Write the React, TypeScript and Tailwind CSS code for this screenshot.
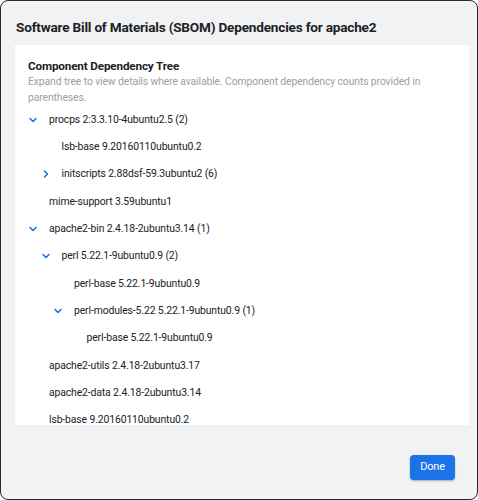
import React from "react";

type Row = { label: string; level: number; chevron?: "down" | "right" };

const rows: Row[] = [
  { label: "procps 2:3.3.10-4ubuntu2.5 (2)", level: 0, chevron: "down" },
  { label: "lsb-base 9.20160110ubuntu0.2", level: 1 },
  { label: "initscripts 2.88dsf-59.3ubuntu2 (6)", level: 1, chevron: "right" },
  { label: "mime-support 3.59ubuntu1", level: 0 },
  { label: "apache2-bin 2.4.18-2ubuntu3.14 (1)", level: 0, chevron: "down" },
  { label: "perl 5.22.1-9ubuntu0.9 (2)", level: 1, chevron: "down" },
  { label: "perl-base 5.22.1-9ubuntu0.9", level: 2 },
  { label: "perl-modules-5.22 5.22.1-9ubuntu0.9 (1)", level: 2, chevron: "down" },
  { label: "perl-base 5.22.1-9ubuntu0.9", level: 3 },
  { label: "apache2-utils 2.4.18-2ubuntu3.17", level: 0 },
  { label: "apache2-data 2.4.18-2ubuntu3.14", level: 0 },
  { label: "lsb-base 9.20160110ubuntu0.2", level: 0 },
];

const indent = ["pl-[21px]", "pl-[33.5px]", "pl-[46px]", "pl-[58.5px]"];

function Chevron({ dir }: { dir: "down" | "right" }) {
  return (
    <svg
      width="10"
      height="10"
      viewBox="0 0 10 10"
      className="absolute left-[-21px] top-1/2 -translate-y-1/2"
      fill="none"
      stroke="#1a73e8"
      strokeWidth="1.6"
      strokeLinecap="round"
      strokeLinejoin="round"
    >
      {dir === "down" ? <path d="M2 3.5 L5 6.5 L8 3.5" /> : <path d="M3.5 2 L6.5 5 L3.5 8" />}
    </svg>
  );
}

export default function App() {
  return (
    <div
      className="w-[478px] h-[500px] box-border border border-[#2a2a2a] rounded-[8px] bg-[#f1f2f4] flex flex-col overflow-hidden"
      style={{ fontFamily: "Roboto, 'Liberation Sans', sans-serif" }}
    >
      <div className="pt-[16px] pl-[15px] leading-[20px] text-[13.6px] tracking-[-0.2px] font-bold text-[#202124]">
        Software Bill of Materials (SBOM) Dependencies for apache2
      </div>
      <div className="mt-[8px] ml-[14px] mr-[8px] h-[380px] bg-white overflow-hidden pl-[13px] pr-[20px] pt-[13px]">
        <div className="text-[11.7px] tracking-[-0.15px] leading-[16px] font-bold text-[#202124]">
          Component Dependency Tree
        </div>
        <div className="text-[10.4px] tracking-[-0.12px] leading-[16px] text-[#9aa0a6]">
          Expand tree to view details where available. Component dependency counts provided in parentheses.
        </div>
        <div className="flex flex-col">
          {rows.map((r, i) => (
            <div key={i} className={`h-[27.3px] flex items-center ${indent[r.level]}`}>
              <span className="relative text-[10.4px] tracking-[-0.12px] text-[#202124] whitespace-nowrap">
                {r.chevron && <Chevron dir={r.chevron} />}
                {r.label}
              </span>
            </div>
          ))}
        </div>
      </div>
      <div className="flex-1 flex items-end justify-end pr-[22px] pb-[19px]">
        <button className="w-[45px] h-[25px] rounded-[4px] bg-[#1a73e8] text-white text-[11px] tracking-[-0.2px] shadow-[0_1px_2px_rgba(0,0,0,0.3)]">
          Done
        </button>
      </div>
    </div>
  );
}
